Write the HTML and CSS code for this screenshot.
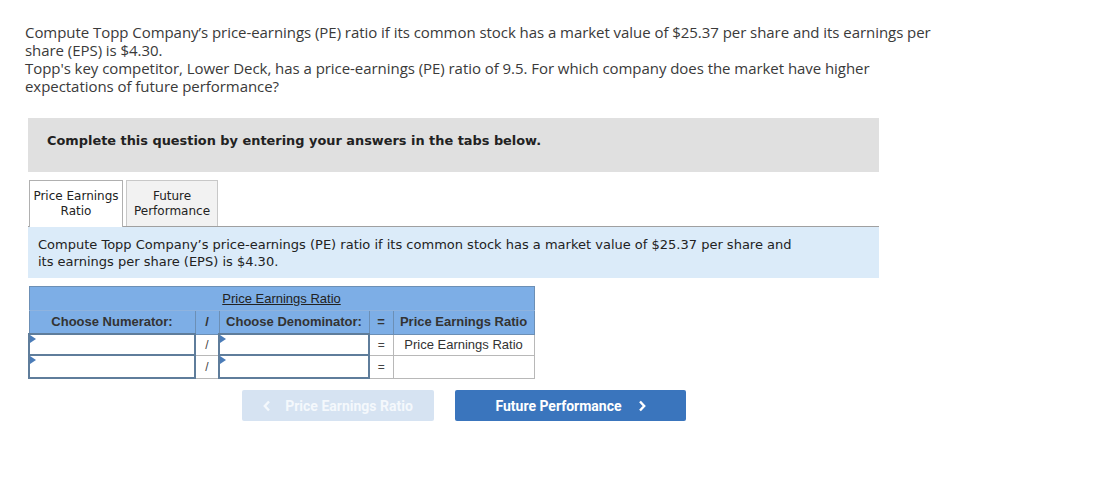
FILE: index.html
```html
<!DOCTYPE html>
<html>
<head>
<meta charset="utf-8">
<link rel="stylesheet" href="styles.css">
</head>
<body>
<div class="page">
  <div class="intro">
    <p>Compute Topp Company’s price-earnings (PE) ratio if its common stock has a market value of $25.37 per share and its earnings per share (EPS) is $4.30.</p>
    <p>Topp's key competitor, Lower Deck, has a price-earnings (PE) ratio of 9.5. For which company does the market have higher expectations of future performance?</p>
  </div>
  <div class="notice">Complete this question by entering your answers in the tabs below.</div>
  <div class="tabs">
    <div class="tab active">Price Earnings<br>Ratio</div>
    <div class="tab">Future<br>Performance</div>
  </div>
  <div class="prompt"><div class="prompt-text">Compute Topp Company’s price-earnings (PE) ratio if its common stock has a market value of $25.37 per share and its earnings per share (EPS) is $4.30.</div></div>
  <table class="grid">
    <tr class="title"><th colspan="5"><u>Price Earnings Ratio</u></th></tr>
    <tr class="heads">
      <th class="c-num">Choose Numerator:</th>
      <th class="c-op">/</th>
      <th class="c-den">Choose Denominator:</th>
      <th class="c-op">=</th>
      <th class="c-res">Price Earnings Ratio</th>
    </tr>
    <tr class="r1">
      <td class="input"><span class="flag"></span></td>
      <td class="op">/</td>
      <td class="input"><span class="flag"></span></td>
      <td class="op">=</td>
      <td class="res">Price Earnings Ratio</td>
    </tr>
    <tr class="r2">
      <td class="input"><span class="flag"></span></td>
      <td class="op">/</td>
      <td class="input"><span class="flag"></span></td>
      <td class="op">=</td>
      <td class="res"></td>
    </tr>
  </table>
  <div class="nav">
    <button class="btn prev"><svg class="chev" width="8" height="12" viewBox="0 0 8 12"><polyline points="6,1.5 1.8,6 6,10.5" fill="none" stroke="currentColor" stroke-width="2.4"/></svg>Price Earnings Ratio</button>
    <button class="btn next">Future Performance<svg class="chev" width="8" height="12" viewBox="0 0 8 12"><polyline points="2,1.5 6.2,6 2,10.5" fill="none" stroke="currentColor" stroke-width="2.4"/></svg></button>
  </div>
</div>
</body>
</html>
```
FILE: styles.css
```css
html, body { margin: 0; padding: 0; background: #fff; }
.page { padding: 23px 0 0 25px; width: 860px; }
.intro { font-family: "Open Sans", sans-serif; font-size: 15px; line-height: 18px; color: #3a3a3a; width: 925px; letter-spacing: -0.05px; }
.intro p { margin: 0; }
.notice {
  margin: 23px 0 0 3px; width: 851px; height: 54px; box-sizing: border-box;
  background: #e0e0e0; padding: 0 0 9px 19px;
  display: flex; align-items: center;
  font-family: "DejaVu Sans", Verdana, sans-serif; font-weight: bold; font-size: 12.9px; color: #222;
}
.tabs { display: flex; gap: 3px; margin: 8px 0 0 3px; border-bottom: 1px solid #a0a0a0; width: 850px; padding-left: 1px; }
.tab {
  font-family: "DejaVu Sans", Verdana, sans-serif; font-size: 12px; line-height: 15px; color: #222;
  text-align: center; height: 46px; box-sizing: border-box; padding-top: 8px;
  border: 1px solid #c8c8c8; border-bottom: none; background: #f2f2f2; width: 92px;
}
.tab.active { background: #fff; width: 94px; border-color: #b0b0b0; margin-bottom: -1px; height: 47px; }
.prompt {
  margin-left: 3px; width: 851px; box-sizing: border-box; height: 51px;
  background: #dbebf9; padding: 9px 10px 0 10px;
}
.prompt-text {
  width: 760px;
  font-family: "DejaVu Sans", Verdana, sans-serif; font-size: 13px; line-height: 17px; color: #222;
}
.grid {
  margin: 8px 0 0 3px; border-collapse: collapse;
  font-family: "Liberation Sans", Arial, sans-serif; font-size: 13px; color: #222;
}
.grid th { background: #7daee6; border: 1px solid #6c8fb5; font-weight: normal; padding: 0; height: 22px; line-height: 14px; }
.grid .title th { height: 23px; color: #222; border-bottom-color: #8fb3de; }
.grid .heads th { font-weight: bold; color: #333; }
.c-num { width: 165px; }
.c-op { width: 23px; }
.c-den { width: 149px; }
.c-res { width: 140px; }
.grid td { padding: 0; border: 1px solid #b8b8b8; text-align: center; line-height: 14px; }
.grid .r1 td { height: 19px; }
.grid .r2 td { height: 21px; }
.grid td.input { border: 2px solid #5f7d9b; position: relative; }
.grid td.op { color: #444; font-size: 12px; }
.grid td.res { color: #333; }
.flag {
  position: absolute; left: 0; top: 0; width: 0; height: 0;
  border-top: 4px solid transparent; border-bottom: 4px solid transparent; border-left: 6px solid #4b7cb8;
}
.nav { display: flex; gap: 21px; margin: 11px 0 0 217px; }
.btn {
  border: none; border-radius: 2px; height: 31px; padding: 0;
  font-family: Roboto, sans-serif; font-weight: bold; font-size: 14px; color: #fff;
  display: flex; align-items: center; justify-content: center;
}
.prev { width: 192px; background: #d6e3f2; color: #f4f8fc; }
.prev .chev { margin-right: 14px; }
.next { width: 231px; background: #3a75bd; }
.next .chev { margin-left: 16px; }
```
